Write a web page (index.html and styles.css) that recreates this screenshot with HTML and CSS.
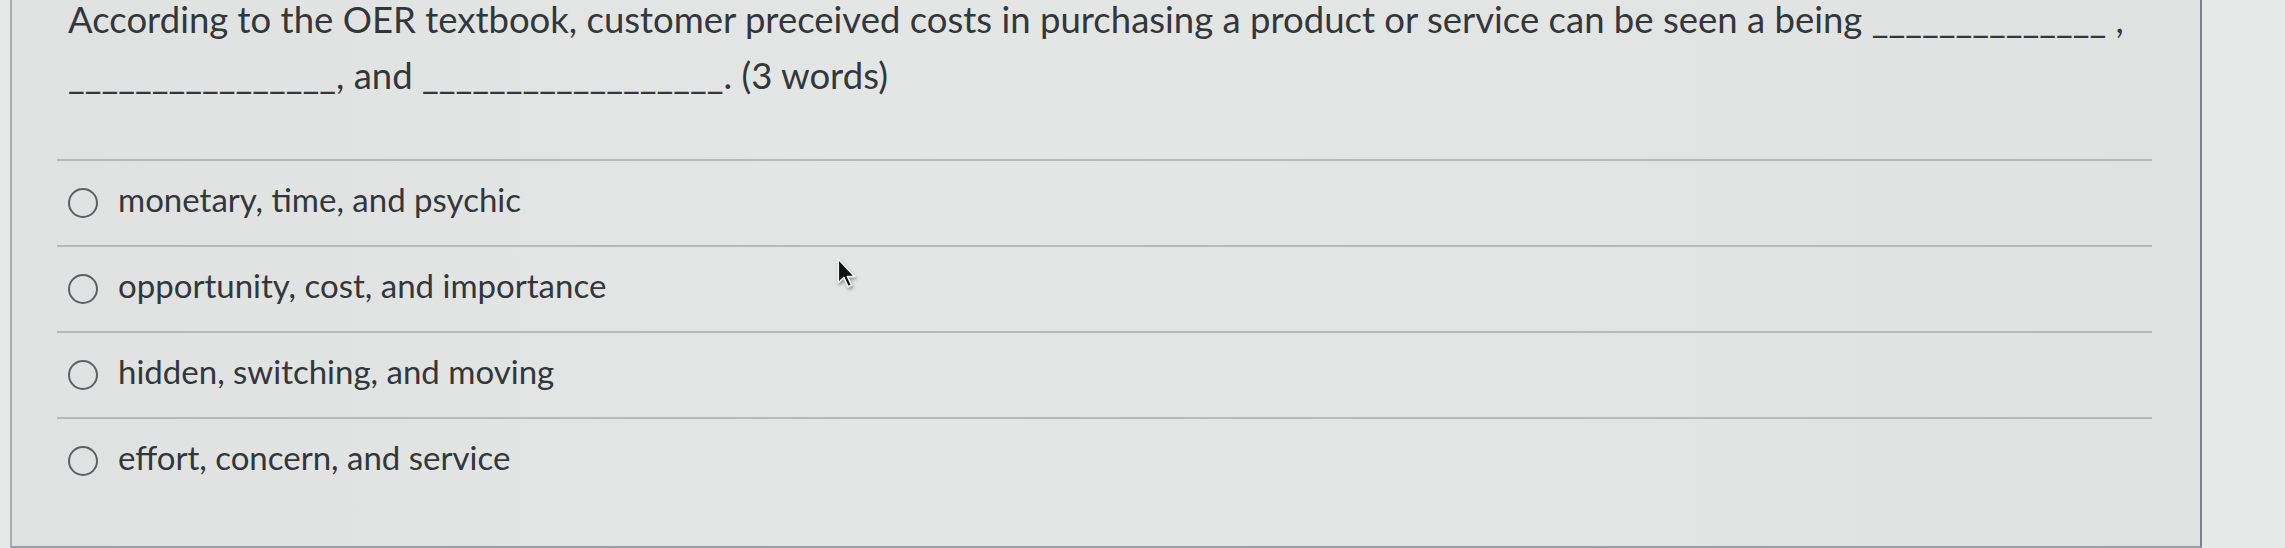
FILE: index.html
```html
<!DOCTYPE html>
<html lang="en">
<head>
<meta charset="utf-8">
<title>Quiz question</title>
<link rel="stylesheet" href="styles.css">
</head>
<body>
<div class="panel">
  <div class="question">According to the OER textbook, customer preceived costs in purchasing a product or service can be seen a being ______________ ,<br>________________, and __________________. (3 words)</div>
  <ul class="options">
    <li class="option"><span class="radio"></span><span class="label">monetary, time, and psychic</span></li>
    <li class="option"><span class="radio"></span><span class="label">opportunity, cost, and importance</span></li>
    <li class="option"><span class="radio"></span><span class="label">hidden, switching, and moving</span></li>
    <li class="option"><span class="radio"></span><span class="label">effort, concern, and service</span></li>
  </ul>
  <svg class="cursor" viewBox="0 0 20 32" width="21" height="33" aria-hidden="true">
    <path d="M2 1 L2 24 L7.5 19 L11.5 28 L15 26.5 L11 18 L18 18 Z" fill="#111" stroke="#f4f4f4" stroke-width="1.6" stroke-linejoin="round"/>
  </svg>
</div>
</body>
</html>
```
FILE: styles.css
```css
html, body {
  margin: 0;
  padding: 0;
}
body {
  background: #e7e9e9;
  font-family: Lato, "Open Sans", sans-serif;
  color: #33363a;
  height: 548px;
  overflow: hidden;
}
.panel {
  position: relative;
  display: flow-root;
  box-sizing: border-box;
  margin-left: 10px;
  width: 2192px;
  height: 548px;
  padding: 0 48px 0 45px;
  background: linear-gradient(90deg, #dfe2e1 0%, #e4e6e5 40%, #e3e5e4 70%, #e0e2e1 100%);
  border-left: 2px solid #a9acad;
  border-right: 2px solid #7d8187;
  border-bottom: 2px solid #9c9fa2;
}
.question {
  margin-top: -9px;
  padding-left: 11px;
  font-size: 36.5px;
  line-height: 56px;
  white-space: nowrap;
}
.options {
  list-style: none;
  margin: 56px 0 0;
  padding: 0;
}
.option {
  display: flex;
  align-items: center;
  box-sizing: border-box;
  height: 86px;
  padding-left: 11px;
  border-top: 2px solid #b6b9b9;
}
.radio {
  flex: none;
  box-sizing: border-box;
  width: 30px;
  height: 30px;
  border: 2.5px solid #5d6063;
  border-radius: 50%;
}
.label {
  margin-left: 20px;
  padding-bottom: 8px;
  font-size: 33px;
  line-height: 40px;
}
.cursor {
  position: absolute;
  left: 824px;
  top: 258px;
  filter: drop-shadow(1px 2px 1.5px rgba(0, 0, 0, 0.35));
}
```
